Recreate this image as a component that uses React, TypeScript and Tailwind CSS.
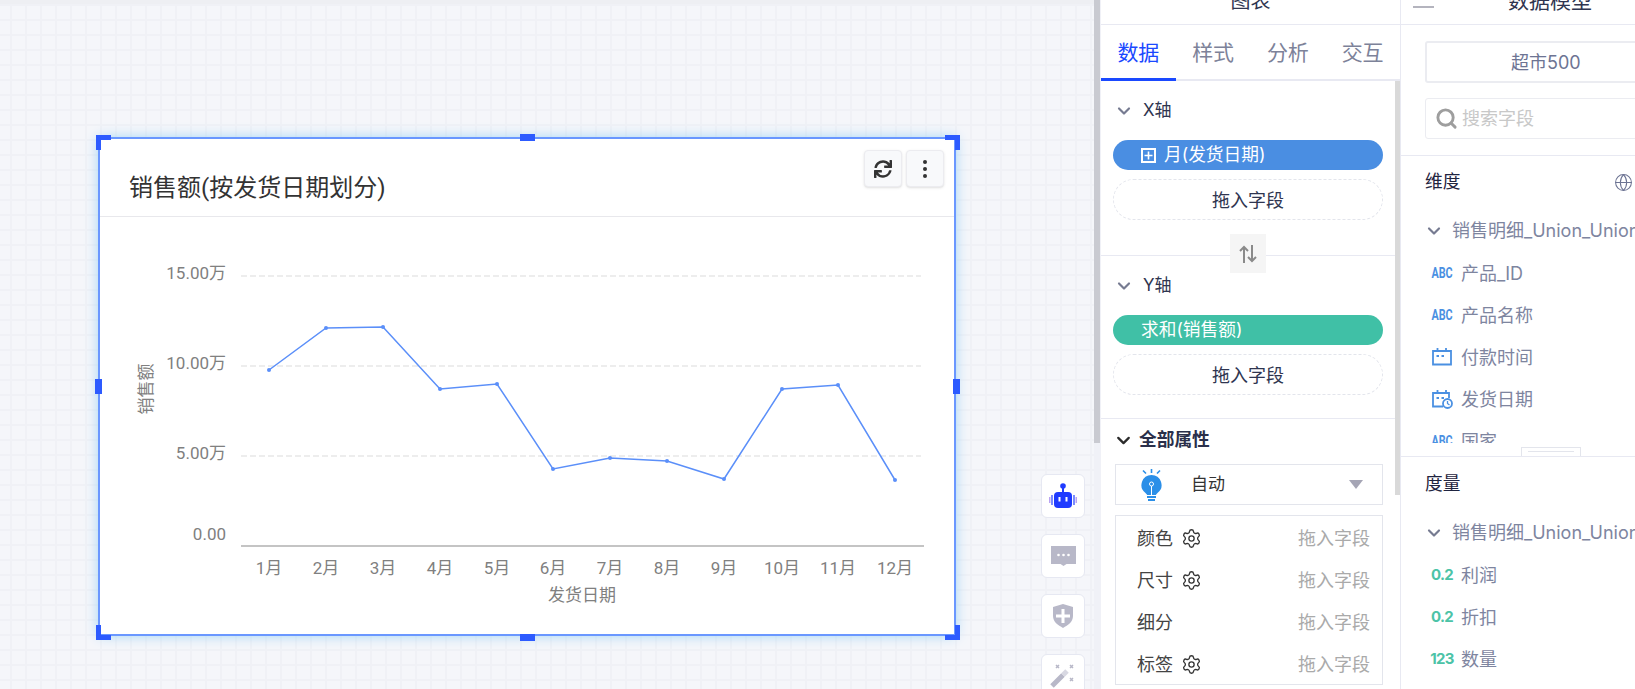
import { ChevronDown, Globe, Search, Settings } from "lucide-react";
import { FaSync } from "react-icons/fa";

const points = [
  [169, 153], [226, 111], [283, 110], [340, 172], [397, 167], [453, 252],
  [510, 241], [567, 244], [624, 262], [682, 172], [738, 168], [795, 263],
];
const months = ["1月", "2月", "3月", "4月", "5月", "6月", "7月", "8月", "9月", "10月", "11月", "12月"];
const ticks = [
  { label: "15.00万", y: 59 },
  { label: "10.00万", y: 149 },
  { label: "5.00万", y: 239 },
];

function Handle({ className }: { className: string }) {
  return <div className={`absolute bg-[#2d5bff] ${className}`} />;
}

function Corner({ className }: { className: string }) {
  return <div className={`absolute w-[15px] h-[15px] border-[#2d5bff] ${className}`} />;
}

function Chart() {
  return (
    <svg width="854" height="416" className="block [font-family:Roboto,'Noto_Sans_CJK_SC',sans-serif]">
      {ticks.map((t) => (
        <g key={t.label}>
          <line x1="141" x2="821" y1={t.y} y2={t.y} stroke="#e8e8e8" strokeWidth="1.5" strokeDasharray="6 3" />
          <text x="126" y={t.y + 3} textAnchor="end" fontSize="17" fill="#808080">{t.label}</text>
        </g>
      ))}
      <text x="126" y="323" textAnchor="end" fontSize="17" fill="#808080">0.00</text>
      <line x1="141" x2="824" y1="329" y2="329" stroke="#b0b0b0" strokeWidth="1.5" />
      <polyline points={points.map((p) => p.join(",")).join(" ")} fill="none" stroke="#5b8ff9" strokeWidth="1.5" />
      {points.map((p, i) => (
        <circle key={i} cx={p[0]} cy={p[1]} r="2" fill="#5b8ff9" />
      ))}
      {months.map((m, i) => (
        <text key={m} x={points[i][0]} y="357" textAnchor="middle" fontSize="17" fill="#808080">{m}</text>
      ))}
      <text x="482" y="384" textAnchor="middle" fontSize="17" fill="#808080">发货日期</text>
      <text transform="translate(52 172) rotate(-90)" textAnchor="middle" fontSize="17" fill="#808080">销售额</text>
    </svg>
  );
}

function ToolButton({ children }: { children: React.ReactNode }) {
  return (
    <div className="w-[44px] h-[44px] shrink-0 flex items-center justify-center rounded-md border border-[#e6e8f2] bg-white">
      {children}
    </div>
  );
}

function Tools() {
  return (
    <div className="absolute left-[1041px] top-[474px] flex flex-col gap-[16px]">
      <ToolButton>
        <svg width="28" height="26" viewBox="0 0 28 26">
          <circle cx="14" cy="3" r="2.8" fill="#1f3bff" />
          <rect x="13" y="4" width="2" height="6" fill="#1f3bff" />
          <rect x="5" y="9" width="18" height="16" rx="4" fill="#1f3bff" />
          <rect x="9.5" y="14" width="2" height="4.5" fill="#fff" />
          <rect x="16.5" y="14" width="2" height="4.5" fill="#fff" />
          <rect x="2" y="12" width="2" height="10" fill="#7b8cff" />
          <rect x="0" y="14" width="1.5" height="6" fill="#b9a3f2" />
          <rect x="24" y="12" width="2" height="10" fill="#7b8cff" />
          <rect x="26.5" y="14" width="1.5" height="6" fill="#b9a3f2" />
        </svg>
      </ToolButton>
      <ToolButton>
        <svg width="25" height="20" viewBox="0 0 25 20">
          <path d="M0 0h25v18h-9.5l-3 2-3-2H0z" fill="#b8b8c8" />
          <circle cx="7.5" cy="9" r="1.3" fill="#fff" />
          <circle cx="12.5" cy="9" r="1.3" fill="#fff" />
          <circle cx="17.5" cy="9" r="1.3" fill="#fff" />
        </svg>
      </ToolButton>
      <ToolButton>
        <svg width="20" height="24" viewBox="0 0 20 24">
          <path d="M10 0l10 3v9c0 6-5 9-10 12C5 21 0 18 0 12V3z" fill="#b8b8c8" />
          <path d="M8.5 5h3v5.5H17v3h-5.5V19h-3v-5.5H3v-3h5.5z" fill="#fff" />
        </svg>
      </ToolButton>
      <ToolButton>
        <svg width="26" height="24" viewBox="0 0 26 24" fill="none">
          <path d="M2 22L13 11" stroke="#b8b8c8" strokeWidth="5" />
          <path d="M13 11l4-4" stroke="#d8d8e2" strokeWidth="5" />
          <path d="M6 1l3 3M9 1L6 4M20 1l3 3M23 1l-3 3M20 14l3 3M23 14l-3 3" stroke="#b8b8c8" strokeWidth="1.5" />
        </svg>
      </ToolButton>
    </div>
  );
}

function AxisRow({ label }: { label: string }) {
  return (
    <div className="h-[30px] flex items-center pl-[13px] text-[17px] text-[#2f3550]">
      <ChevronDown size={20} strokeWidth={2.6} className="text-[#767b91]" />
      <span className="ml-[9px]">{label}</span>
    </div>
  );
}

function DropZone() {
  return (
    <div className="mt-[9px] ml-[12px] w-[270px] h-[41px] pt-[2px] rounded-full border border-dashed border-[#e3e5ec] flex items-center justify-center text-[18px] text-[#2f3550]">
      拖入字段
    </div>
  );
}

function AttrRow({ label, gear }: { label: string; gear?: boolean }) {
  return (
    <div className="h-[42px] flex items-center pl-[21px] pr-[12px]">
      <span className="text-[18px] text-[#444]">{label}</span>
      {gear && <Settings size={21} strokeWidth={1.5} className="ml-[8px] text-[#333]" />}
      <span className="ml-auto text-[18px] text-[#aaa]">拖入字段</span>
    </div>
  );
}

function ChartPanel() {
  return (
    <div className="w-[300px] shrink-0 border-r border-[#e8e9f2] bg-white relative">
      <div className="h-[25px] border-b border-[#e8e9f2] overflow-hidden flex justify-center">
        <span className="text-[20px] leading-[26px] -mt-[12px] text-[#2f3550]">图表</span>
      </div>
      <div className="h-[56px] flex border-b-2 border-[#e8e9f2] text-[21px] text-[#7d8299]">
        <div className="w-[75px] h-[56px] pt-[2px] flex items-center justify-center border-b-[3px] border-[#1a49ff] text-[#1a49ff]">数据</div>
        <div className="w-[75px] pt-[2px] flex items-center justify-center">样式</div>
        <div className="w-[75px] pt-[2px] flex items-center justify-center">分析</div>
        <div className="w-[75px] pt-[2px] flex items-center justify-center">交互</div>
      </div>
      <div className="h-[175px] border-b border-[#e8e9f2] pt-[15px] relative">
        <AxisRow label="X轴" />
        <div className="mt-[14px] ml-[12px] w-[270px] h-[30px] rounded-full bg-[#4a8ee2] flex items-center pl-[28px] text-[17.7px] text-white">
          <svg width="15" height="15" viewBox="0 0 15 15" fill="none" stroke="#fff" strokeWidth="2">
            <rect x="1" y="1" width="13" height="13" />
            <path d="M7.5 3.5v8M3.5 7.5h8" strokeWidth="1.6" />
          </svg>
          <span className="ml-[8px]">月(发货日期)</span>
        </div>
        <DropZone />
        <div className="absolute left-[129px] top-[153px] w-[36px] h-[39px] bg-[#f5f5f5] z-10 flex items-center justify-center">
          <svg width="20" height="18" viewBox="0 0 20 18" fill="none" stroke="#8a8a8a" strokeWidth="2">
            <path d="M6 18V2M2 6l4-4 4 4" />
            <path d="M14 0v16M10 12l4 4 4-4" />
          </svg>
        </div>
      </div>
      <div className="h-[163px] border-b border-[#e8e9f2] pt-[15px]">
        <AxisRow label="Y轴" />
        <div className="mt-[14px] ml-[12px] w-[270px] h-[30px] rounded-full bg-[#40c0a6] flex items-center pl-[28px] text-[17.7px] text-white">
          求和(销售额)
        </div>
        <DropZone />
      </div>
      <div className="h-[36px] mt-[3px] flex items-center pl-[12px] text-[17.7px] font-bold text-[#2a2f4a]">
        <ChevronDown size={21} strokeWidth={2.6} className="text-[#2b2b2b]" />
        <span className="ml-[5px]">全部属性</span>
      </div>
      <div className="mt-[6px] ml-[14px] w-[268px] h-[41px] border border-[#e3e5ec] flex items-center pl-[25px]">
        <svg width="21" height="33" viewBox="0 0 21 33" className="mt-[2px]">
          <path d="M10.5 0v4M2 1.5l3 3M19 1.5l-3 3" stroke="#2b8fe8" strokeWidth="1.6" />
          <path d="M10.5 6A10 10 0 0 0 4.5 24c1 1 1.5 1.5 1.5 2h9c0-.5.5-1 1.5-2a10 10 0 0 0-6-18z" fill="#2b8fe8" />
          <path d="M10.5 17v9" stroke="#fff" strokeWidth="1" />
          <circle cx="10.5" cy="15" r="2" fill="none" stroke="#fff" />
          <path d="M6 28h9M7 31h7" stroke="#2b8fe8" strokeWidth="2" />
        </svg>
        <span className="ml-[29px] text-[17px] text-[#333]">自动</span>
        <div className="ml-auto mr-[19px] w-0 h-0 border-x-[7px] border-x-transparent border-t-[9px] border-t-[#a5a5b5]" />
      </div>
      <div className="mt-[10px] ml-[14px] w-[268px] h-[170px] border border-[#e3e5ec] py-[1px]">
        <AttrRow label="颜色" gear />
        <AttrRow label="尺寸" gear />
        <AttrRow label="细分" />
        <AttrRow label="标签" gear />
      </div>
      <div className="absolute left-[294px] top-[81px] w-[5px] h-[414px] bg-[#d9d9d9]" />
    </div>
  );
}

function Abc() {
  return (
    <span className="w-[22px] flex justify-center text-[15px] font-bold text-[#4a90e2] scale-x-[0.72] [font-family:Roboto,sans-serif]">
      ABC
    </span>
  );
}

function Num({ label }: { label: string }) {
  return <span className="w-[22px] flex justify-center text-[15px] font-bold text-[#4cc3a7] tracking-tighter">{label}</span>;
}

function FieldRow({ icon, label }: { icon: React.ReactNode; label: string }) {
  return (
    <div className="h-[42px] shrink-0 flex items-center pl-[30px] text-[18px] text-[#7e859f] whitespace-nowrap">
      {icon}
      <span className="ml-[8px]">{label}</span>
    </div>
  );
}

function TreeHead() {
  return (
    <div className="h-[43px] flex items-center pl-[23px] text-[18px] text-[#7e859f] whitespace-nowrap">
      <ChevronDown size={20} strokeWidth={2.6} className="text-[#767b91] shrink-0" />
      <span className="ml-[8px]">销售明细_Union_Union</span>
    </div>
  );
}

function CalendarIcon({ clock }: { clock?: boolean }) {
  return (
    <svg width="22" height="20" viewBox="0 0 22 20" fill="none" stroke="#4a90e2" strokeWidth="1.8">
      <path d={clock ? "M12 17.5H2V4h16v5" : "M2 4h18v13.5H2z"} />
      <path d="M6.5 1v4M15 1v4" />
      <path d="M5.5 9h2.5M10.5 9h2.5" strokeWidth="2" />
      {clock && <circle cx="16.5" cy="14.5" r="4.5" fill="#fff" />}
      {clock && <path d="M16.5 12v2.5l2 1.5" strokeWidth="1.3" />}
    </svg>
  );
}

function ModelPanel() {
  return (
    <div className="flex-1 min-w-0 bg-white overflow-hidden">
      <div className="h-[25px] border-b border-[#e8e9f2] overflow-hidden relative pl-[12px] pt-[6px]">
        <div className="w-[21px] h-[2px] bg-[#b4b4be]" />
        <span className="absolute left-[107px] -top-[13px] text-[21px] leading-[28px] text-[#2f3550]">数据模型</span>
      </div>
      <div className="w-[300px] ml-[24px] mt-[16px] h-[42px] border-2 border-[#ebecf1] rounded-[3px] text-[18px] text-[#6d7493] pl-[84px] flex items-center">
        超市500
      </div>
      <div className="w-[300px] ml-[24px] mt-[15px] h-[41px] border border-[#ebecf1] rounded-[3px] flex items-center pl-[9px] text-[18px] text-[#c8c8c8]">
        <Search size={23} strokeWidth={3} className="text-[#9e9e9e]" />
        <span className="ml-[4px]">搜索字段</span>
      </div>
      <div className="mt-[16px] border-t border-[#e8e9f2] h-[288px] overflow-hidden">
        <div className="h-[53px] flex items-center pl-[24px] pr-[2px] text-[17.7px] text-[#1f2440]">
          维度
          <Globe size={19} strokeWidth={1.3} className="ml-auto text-[#6d7493]" />
        </div>
        <TreeHead />
        <FieldRow icon={<Abc />} label="产品_ID" />
        <FieldRow icon={<Abc />} label="产品名称" />
        <FieldRow icon={<CalendarIcon />} label="付款时间" />
        <FieldRow icon={<CalendarIcon clock />} label="发货日期" />
        <FieldRow icon={<Abc />} label="国家" />
      </div>
      <div className="h-[14px] pt-[4px] border-b border-[#e8e9f2]">
        <div className="ml-[120px] w-[60px] h-[9px] border border-b-0 border-[#e3e5ec] pt-[3px] px-[6px]">
          <div className="h-px bg-[#e3e5ec]" />
        </div>
      </div>
      <div className="h-[54px] flex items-center pl-[24px] text-[17.7px] text-[#1f2440]">度量</div>
      <TreeHead />
      <FieldRow icon={<Num label="0.2" />} label="利润" />
      <FieldRow icon={<Num label="0.2" />} label="折扣" />
      <FieldRow icon={<Num label="123" />} label="数量" />
    </div>
  );
}

export default function App() {
  return (
    <div className="w-[1635px] h-[689px] flex overflow-hidden bg-white [font-family:Inter,'Noto_Sans_CJK_SC',sans-serif]">
      <div className="w-[1094px] shrink-0 relative bg-[#f5f6fa] bg-[linear-gradient(#f0f1f6_2px,transparent_2px),linear-gradient(90deg,#f0f1f6_2px,transparent_2px)] bg-[size:15px_15px] bg-[position:10px_4px]">
        <div className="h-[4px] bg-[#eeeff3]" />
        <div className="relative ml-[98px] mt-[133px] w-[858px] h-[499px]">
          <div className="w-full h-full bg-white border-2 border-[#6a97ff] shadow-[0_0_12px_#a5d6f5]">
            <div className="h-[78px] border-b border-[#e8e8ec] pl-[29px] pt-[32px] text-[24px] leading-[34px] text-[#333] [font-family:Roboto,'Noto_Sans_CJK_SC',sans-serif]">
              销售额(按发货日期划分)
            </div>
            <Chart />
          </div>
          <div className="absolute right-[12px] top-[13px] flex gap-[4px]">
            <div className="w-[38px] h-[37px] rounded-[4px] bg-[#f8f9fb] border border-[#ececf0] shadow-sm flex items-center justify-center">
              <FaSync size={18} className="text-[#333]" />
            </div>
            <div className="w-[38px] h-[37px] rounded-[4px] bg-[#f8f9fb] border border-[#ececf0] shadow-sm flex flex-col items-center justify-center gap-[3px]">
              <div className="w-[4px] h-[4px] rounded-full bg-[#333]" />
              <div className="w-[4px] h-[4px] rounded-full bg-[#333]" />
              <div className="w-[4px] h-[4px] rounded-full bg-[#333]" />
            </div>
          </div>
          <Corner className="-left-[2px] -top-[2px] border-l-[5px] border-t-[5px]" />
          <Corner className="-right-[4px] -top-[2px] border-r-[5px] border-t-[5px]" />
          <Corner className="-left-[2px] -bottom-[4px] border-l-[5px] border-b-[5px]" />
          <Corner className="-right-[4px] -bottom-[4px] border-r-[5px] border-b-[5px]" />
          <Handle className="left-[422px] -top-[3px] w-[15px] h-[7px]" />
          <Handle className="left-[422px] -bottom-[5px] w-[15px] h-[7px]" />
          <Handle className="-left-[3px] top-[242px] w-[7px] h-[15px]" />
          <Handle className="-right-[4px] top-[242px] w-[7px] h-[15px]" />
        </div>
        <Tools />
      </div>
      <div className="w-[7px] shrink-0 bg-[#f0f1f7]">
        <div className="w-[6px] h-[443px] bg-[#c9cad1]" />
      </div>
      <ChartPanel />
      <ModelPanel />
    </div>
  );
}
